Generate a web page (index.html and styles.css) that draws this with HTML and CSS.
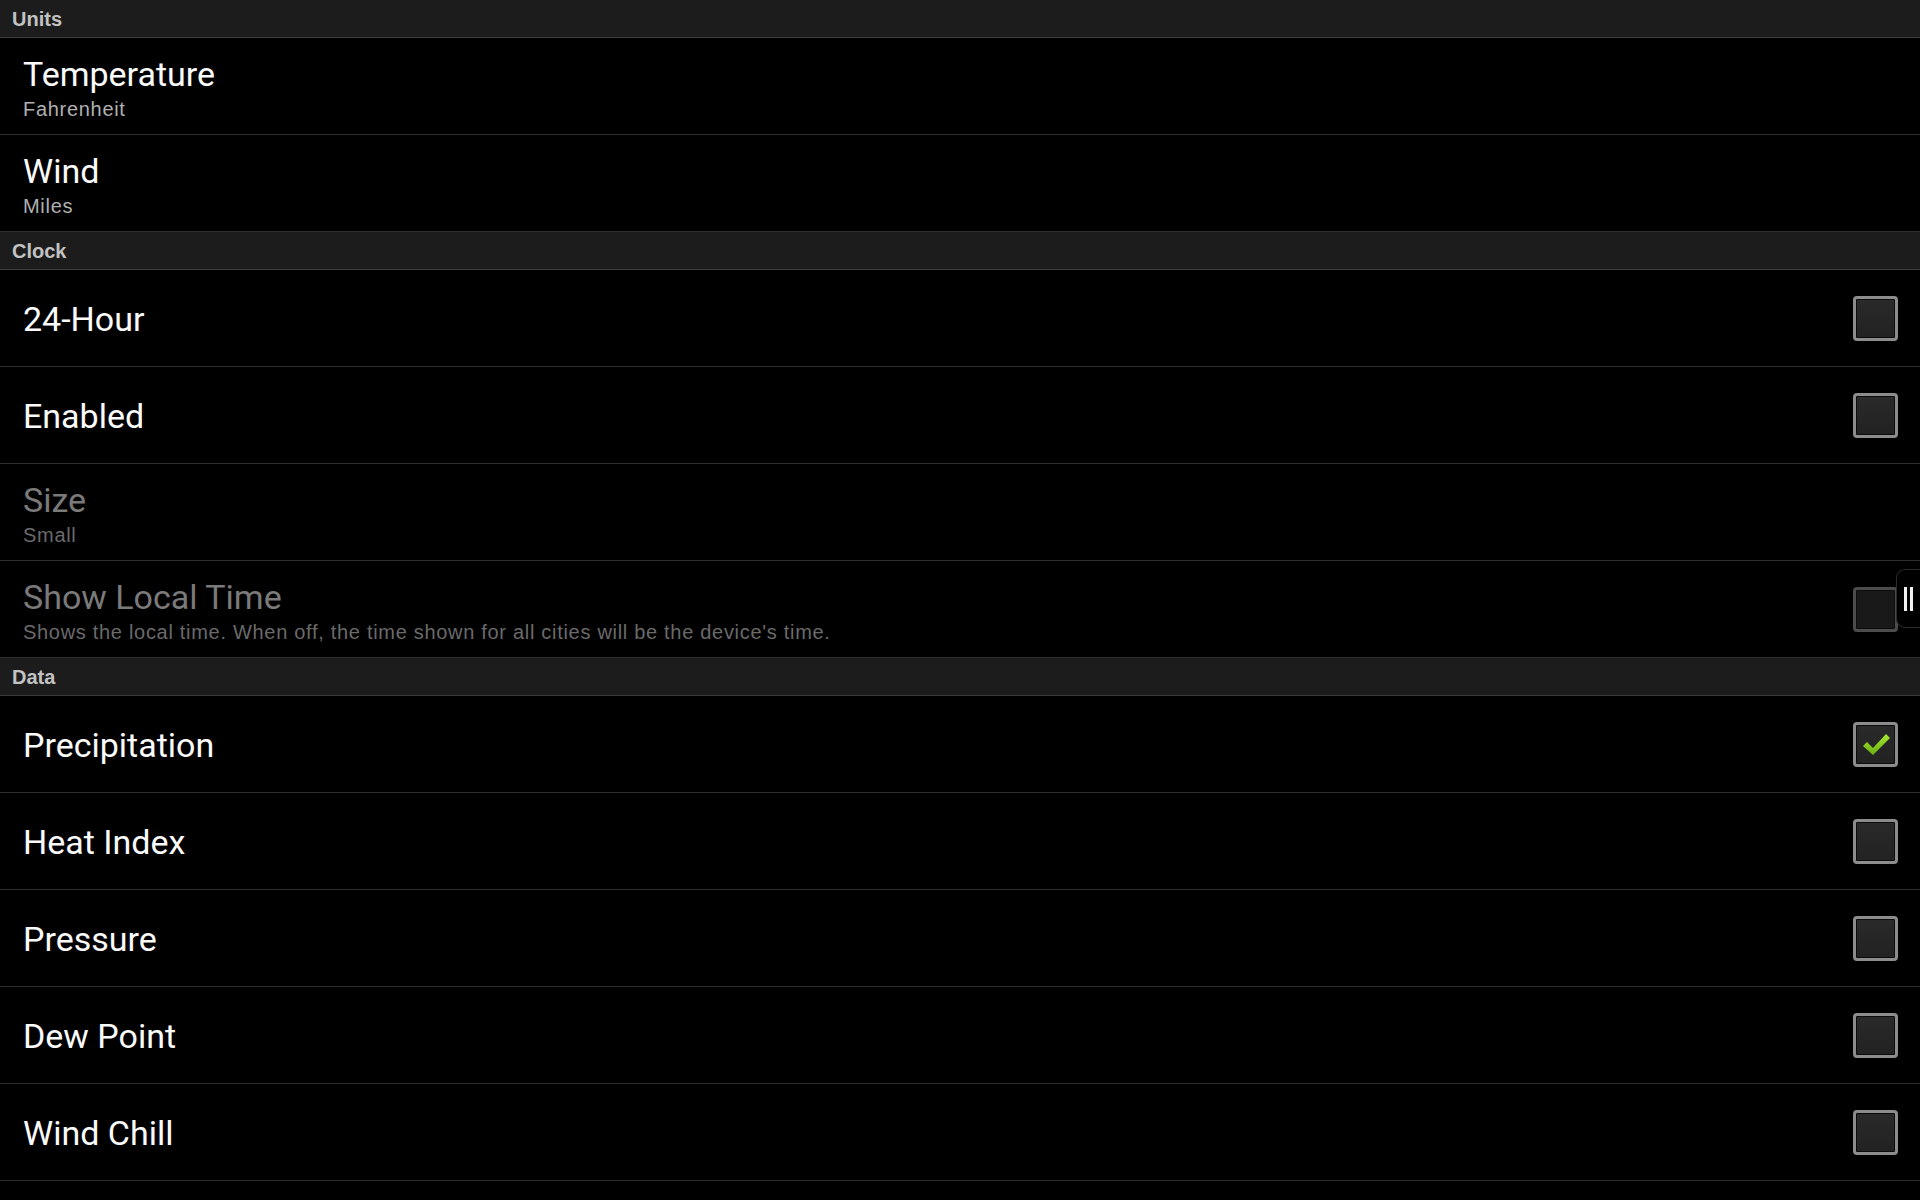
FILE: index.html
```html
<!DOCTYPE html>
<html>
<head>
<meta charset="utf-8">
<link rel="stylesheet" href="styles.css">
</head>
<body>
<div class="prefs">
  <div class="cat">Units</div>
  <div class="row">
    <div class="text"><div class="title">Temperature</div><div class="summary">Fahrenheit</div></div>
  </div>
  <div class="row">
    <div class="text"><div class="title">Wind</div><div class="summary">Miles</div></div>
  </div>

  <div class="cat">Clock</div>
  <div class="row">
    <div class="text"><div class="title">24-Hour</div></div>
    <span class="cb"></span>
  </div>
  <div class="row">
    <div class="text"><div class="title">Enabled</div></div>
    <span class="cb"></span>
  </div>
  <div class="row disabled">
    <div class="text"><div class="title">Size</div><div class="summary">Small</div></div>
  </div>
  <div class="row disabled">
    <div class="text"><div class="title">Show Local Time</div><div class="summary">Shows the local time. When off, the time shown for all cities will be the device's time.</div></div>
    <span class="cb"></span>
    <div class="thumb"><span class="bar"></span><span class="bar"></span></div>
  </div>

  <div class="cat">Data</div>
  <div class="row">
    <div class="text"><div class="title">Precipitation</div></div>
    <span class="cb checked"><svg viewBox="0 0 45 45" width="45" height="45"><defs><linearGradient id="g" x1="0" y1="0" x2="0" y2="1"><stop offset="0" stop-color="#a6e830"/><stop offset="1" stop-color="#6aae12"/></linearGradient></defs><polygon points="10,24 14,20 20,26 33,12 37,16 20,33" fill="url(#g)"/></svg></span>
  </div>
  <div class="row">
    <div class="text"><div class="title">Heat Index</div></div>
    <span class="cb"></span>
  </div>
  <div class="row">
    <div class="text"><div class="title">Pressure</div></div>
    <span class="cb"></span>
  </div>
  <div class="row">
    <div class="text"><div class="title">Dew Point</div></div>
    <span class="cb"></span>
  </div>
  <div class="row">
    <div class="text"><div class="title">Wind Chill</div></div>
    <span class="cb"></span>
  </div>
</div>
</body>
</html>
```
FILE: styles.css
```css
html, body {
  margin: 0;
  padding: 0;
  background: #000;
  height: 100%;
  overflow: hidden;
}
.prefs {
  display: flex;
  flex-direction: column;
}
.cat {
  box-sizing: border-box;
  height: 38px;
  padding: 1px 0 0 12px;
  background: #1c1c1c;
  border-bottom: 1px solid #3a3a3a;
  color: #c2c2c2;
  font-family: "Liberation Sans", Arial, sans-serif;
  font-weight: bold;
  font-size: 20px;
  line-height: 36px;
}
.row {
  position: relative;
  border-bottom: 1px solid #2e2e2e;
  display: flex;
  align-items: center;
  padding: 2px 22px 0 23px;
  box-sizing: content-box;
  height: 94px;
}
.text {
  flex: 1;
  min-width: 0;
}
.title {
  font-family: Roboto, "Noto Sans", sans-serif;
  font-size: 34px;
  line-height: 40px;
  color: #fafafa;
}
.summary {
  font-family: "Liberation Sans", Arial, sans-serif;
  font-size: 20px;
  line-height: 24px;
  letter-spacing: 0.7px;
  margin-top: 3px;
  color: #b0b0b0;
}
.disabled .title { color: #7a7a7a; }
.disabled .summary { color: #6a6a6a; }
.cb {
  width: 39px;
  height: 39px;
  border: 3px solid #8c8c8c;
  border-radius: 4px;
  background: linear-gradient(#2a2a2a, #222);
  box-shadow: inset 0 0 0 1px #0c0c0c;
  margin-top: -2px;
  flex: none;
  position: relative;
}
.cb svg {
  position: absolute;
  left: -3px;
  top: -3px;
}
.disabled .cb {
  border-color: #4c4c4c;
  background: #191919;
}
.thumb {
  position: absolute;
  right: 0;
  top: 8px;
  width: 24px;
  height: 59px;
  background: #000;
  border: 1px solid #2c2c2c;
  border-right: none;
  border-radius: 9px 0 0 9px;
  display: flex;
  justify-content: flex-start;
  align-items: center;
  gap: 3px;
  padding-left: 7px;
  box-sizing: border-box;
}
.bar {
  width: 3px;
  height: 24px;
  background: #f2f2f2;
}
```
